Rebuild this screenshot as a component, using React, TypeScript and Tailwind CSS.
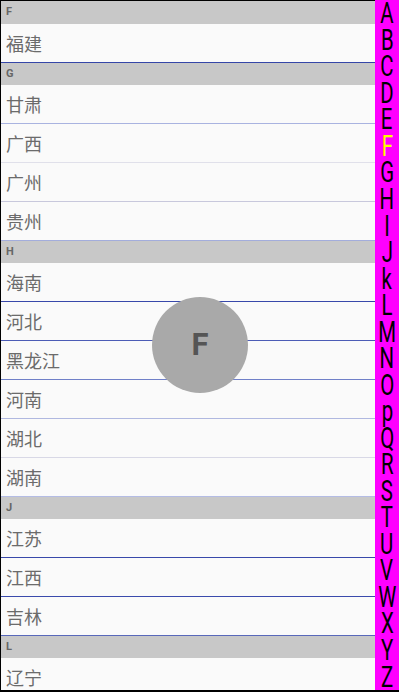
import React from 'react';

type Row =
  | { kind: 'header'; letter: string }
  | { kind: 'item'; name: string; line: string };

// section headers and provinces as shown in the list
const rows: Row[] = [
  { kind: 'header', letter: 'F' },
  { kind: 'item', name: '福建', line: 'border-[#3546a8]' },
  { kind: 'header', letter: 'G' },
  { kind: 'item', name: '甘肃', line: 'border-[#a9b3e0]' },
  { kind: 'item', name: '广西', line: 'border-[#e0e0ea]' },
  { kind: 'item', name: '广州', line: 'border-[#c8c8dc]' },
  { kind: 'item', name: '贵州', line: 'border-[#a3addc]' },
  { kind: 'header', letter: 'H' },
  { kind: 'item', name: '海南', line: 'border-[#3848aa]' },
  { kind: 'item', name: '河北', line: 'border-[#4c5cb6]' },
  { kind: 'item', name: '黑龙江', line: 'border-[#7080c8]' },
  { kind: 'item', name: '河南', line: 'border-[#b0b8e0]' },
  { kind: 'item', name: '湖北', line: 'border-[#d8d8e6]' },
  { kind: 'item', name: '湖南', line: 'border-[#b4bce4]' },
  { kind: 'header', letter: 'J' },
  { kind: 'item', name: '江苏', line: 'border-[#3848aa]' },
  { kind: 'item', name: '江西', line: 'border-[#3a4aac]' },
  { kind: 'item', name: '吉林', line: 'border-[#5868ba]' },
  { kind: 'header', letter: 'L' },
  { kind: 'item', name: '辽宁', line: 'border-transparent' },
];

const letters = ['A', 'B', 'C', 'D', 'E', 'F', 'G', 'H', 'I', 'J', 'k', 'L', 'M', 'N', 'O', 'p', 'Q', 'R', 'S', 'T', 'U', 'V', 'W', 'X', 'Y', 'Z'];

export default function App() {
  return (
    <div className="relative w-[399px] h-[692px] bg-black pl-[1px] pt-[1px] pb-[2px] flex overflow-hidden font-['Roboto','Noto_Sans_CJK_SC',sans-serif]">
      {/* List */}
      <div className="flex-1 flex flex-col overflow-hidden bg-[#fafafa]">
        {rows.map((row, i) =>
          row.kind === 'header' ? (
            <div
              key={i}
              className={`${i === 0 ? 'h-[23px]' : 'h-[22px]'} shrink-0 bg-[#c8c8c8] flex items-center pl-[5px] text-[11px] font-bold text-[#666666]`}
            >
              {row.letter}
            </div>
          ) : (
            <div
              key={i}
              className={`h-[39px] shrink-0 bg-[#fafafa] border-b ${row.line} flex items-center pl-[5px] text-[18px] text-[#6b6b6b] font-['Noto_Sans_CJK_SC',sans-serif]`}
            >
              {row.name}
            </div>
          )
        )}
      </div>

      {/* Index bar */}
      <div className="w-[24px] shrink-0 bg-[#ff00ff] flex flex-col -mt-[1px]">
        {letters.map((l) => (
          <div
            key={l}
            className={`flex-1 basis-0 min-h-0 flex items-center justify-center leading-[26px] text-[30px] ${l === 'F' ? 'text-[#ffff00]' : 'text-black'}`}
          >
            <span className="inline-block scale-x-[0.68]">{l}</span>
          </div>
        ))}
      </div>

      {/* Selected letter bubble */}
      <div className="absolute left-[152px] top-[297px] w-[96px] h-[96px] rounded-full bg-[#a9a9a9] flex items-center justify-center text-[31px] font-bold text-[#555555]">
        F
      </div>
    </div>
  );
}
